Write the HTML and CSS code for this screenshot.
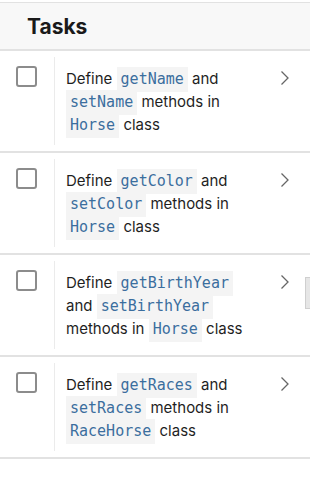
FILE: index.html
```html
<!DOCTYPE html>
<html lang="en">
<head>
  <meta charset="UTF-8">
  <meta name="viewport" content="width=device-width, initial-scale=1.0">
  <title>Tasks</title>
  <link rel="stylesheet" href="styles.css">
</head>
<body>

<div class="panel">
  <div class="header">
    <h2>Tasks</h2>
  </div>

  <div class="task">
    <div class="check"><span class="box"></span></div>
    <div class="body">
      <div class="text">Define <code>getName</code> and <code>setName</code> methods in <code>Horse</code> class</div>
      <svg class="arrow" width="10" height="16" viewBox="0 0 10 16"><path d="M1.5 1.5 L8 8 L1.5 14.5" fill="none" stroke="#666" stroke-width="1.3"/></svg>
    </div>
  </div>

  <div class="task">
    <div class="check"><span class="box"></span></div>
    <div class="body">
      <div class="text">Define <code>getColor</code> and <code>setColor</code> methods in <code>Horse</code> class</div>
      <svg class="arrow" width="10" height="16" viewBox="0 0 10 16"><path d="M1.5 1.5 L8 8 L1.5 14.5" fill="none" stroke="#666" stroke-width="1.3"/></svg>
    </div>
  </div>

  <div class="task">
    <div class="check"><span class="box"></span></div>
    <div class="body">
      <div class="text">Define <code>getBirthYear</code> and <code>setBirthYear</code> methods in <code>Horse</code> class</div>
      <svg class="arrow" width="10" height="16" viewBox="0 0 10 16"><path d="M1.5 1.5 L8 8 L1.5 14.5" fill="none" stroke="#666" stroke-width="1.3"/></svg>
    </div>
    <span class="handle"></span>
  </div>

  <div class="task">
    <div class="check"><span class="box"></span></div>
    <div class="body">
      <div class="text">Define <code>getRaces</code> and <code>setRaces</code> methods in <code>RaceHorse</code> class</div>
      <svg class="arrow" width="10" height="16" viewBox="0 0 10 16"><path d="M1.5 1.5 L8 8 L1.5 14.5" fill="none" stroke="#666" stroke-width="1.3"/></svg>
    </div>
  </div>
</div>

</body>
</html>
```

FILE: styles.css
```css
body { margin: 0; background-color: #ffffff; font-family: Inter, "Noto Sans", sans-serif; color: #1f1f1f; }
.panel { margin-top: 2px; border-top: 1px solid #e2e2e2; }
.header { background-color: #f8f8f8; height: 46px; border-bottom: 2px solid #e2e2e2; display: flex; align-items: center; padding-left: 27px; }
.header h2 { margin: 0; font-size: 21px; font-weight: 700; color: #1a1a1a; }
.task { position: relative; display: flex; padding: 6px 0; border-bottom: 2px solid #e2e2e2; }
.check { width: 54px; flex-shrink: 0; padding-top: 9px; }
.box { display: block; margin-left: 16px; width: 21px; height: 21px; box-sizing: border-box; border: 2px solid #8c8c8c; border-radius: 3px; }
.body { flex: 1; display: flex; border-left: 1px solid #ebebeb; padding: 10px 0 9px 11px; }
.text { width: 190px; font-size: 15px; line-height: 23px; }
code { font-family: "DejaVu Sans Mono", monospace; font-size: 15px; line-height: 1; color: #3b6e9e; background-color: #f4f4f4; padding: 3px 4px 4px; }
.arrow { margin-left: 24px; margin-top: 3px; }
.handle { position: absolute; right: 0; top: 22px; width: 4px; height: 30px; background-color: #e6e6e6; border: 1px solid #cfcfcf; border-right: none; }
```
